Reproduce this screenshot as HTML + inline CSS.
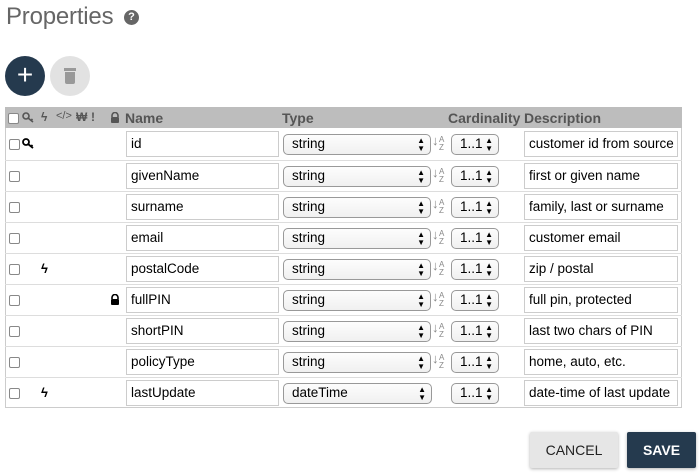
<!DOCTYPE html>
<html><head><style>
*{box-sizing:border-box;margin:0;padding:0}
body{width:700px;height:474px;background:#fff;font-family:"Liberation Sans",sans-serif;position:relative;overflow:hidden;color:#000}
.a{position:absolute}
h1{position:absolute;left:6px;top:3px;font-size:24px;font-weight:normal;color:#666;letter-spacing:-0.2px}
.help{position:absolute;left:124px;top:10px;width:15px;height:15px;border-radius:50%;background:#666;color:#fff;font-size:11px;font-weight:bold;text-align:center;line-height:15px}
.add{left:5px;top:56px;width:40px;height:40px;border-radius:50%;background:#253a4e;color:#fff;font-size:28px;text-align:center;line-height:38px}
.del{left:50px;top:56px;width:40px;height:40px;border-radius:50%;background:#e2e2e2}
.tbl{left:5px;top:107px;width:677px;height:301px;border:1px solid #ccc;border-top:none}
.hdr{left:5px;top:107px;width:677px;height:21px;background:#bdbdbd}
.hdr span{position:absolute;top:3px;font-size:14px;font-weight:bold;color:#555}
.cb{position:absolute;width:11px;height:11px;border:1px solid #888;border-radius:2px;background:#fff}
.row{position:absolute;left:5px;width:677px;height:31px;border-top:1px solid #ddd}
.in{position:absolute;top:2px;height:26px;border:1px solid #ccc;font-size:13.5px;line-height:24px;padding-left:4px;background:#fff;white-space:nowrap;overflow:hidden}
.sel{position:absolute;top:5px;height:21px;border:1px solid #999;border-radius:5px;font-size:13.5px;line-height:17px;padding-left:8px;background:linear-gradient(#fdfdfd,#f0f0f0)}
.sel i{position:absolute;right:5px;top:0;font-style:normal;font-size:8px;line-height:8px;top:2px;}
.sort{position:absolute;left:427px;top:6px;font-size:8px;color:#888;line-height:8px}
</style></head><body>
<h1>Properties</h1><div class="help">?</div>
<div class="a add">+</div>
<div class="a del"><div class="a" style="left:14px;top:12px;width:12px;height:3px;background:#999"></div><div class="a" style="left:15px;top:16px;width:10px;height:12px;background:#999;border-radius:0 0 2px 2px"></div></div>
<div class="a tbl"></div>
<div class="a hdr">
<div class="cb" style="left:3px;top:6px"></div>
<svg class="a" style="left:17px;top:5px" width="13" height="11"><circle cx="4" cy="4" r="3" stroke="#555" stroke-width="1.6" fill="none"/><path d="M6 6L11 10M9 8.5L10.5 7" stroke="#555" stroke-width="1.6"/></svg>
<span style="left:36px;font-size:12px">ϟ</span>
<span style="left:51px;font-size:11px;font-weight:normal">&lt;/&gt;</span>
<span style="left:71px;font-size:12px">₩</span>
<span style="left:86px;font-size:12px">!</span>
<svg class="a" style="left:105px;top:5px" width="10" height="11"><path d="M2 5V3.5a3 3 0 0 1 6 0V5" stroke="#555" stroke-width="1.6" fill="none"/><rect x="1" y="5" width="8" height="6" rx="1" fill="#555"/></svg>
<span style="left:120px">Name</span>
<span style="left:277px">Type</span>
<span style="left:443px">Cardinality</span>
<span style="left:519px">Description</span>
</div>

<div id="rows"></div>
<script>
var d=[["id","string","customer id from source","k"],["givenName","string","first or given name",""],["surname","string","family, last or surname",""],["email","string","customer email",""],["postalCode","string","zip / postal","b"],["fullPIN","string","full pin, protected","l"],["shortPIN","string","last two chars of PIN",""],["policyType","string","home, auto, etc.",""],["lastUpdate","dateTime","date-time of last update","b"]];
var h="";
d.forEach(function(r,i){
var t=129+31*i;var last=r[1]=="dateTime";
h+='<div class="row" style="top:'+t+'px;'+(i==0?'border-top:none':'')+'">';
h+='<div class="cb" style="left:4px;top:10px"></div>';
if(r[3]=="k")h+='<svg class="a" style="left:17px;top:9px" width="13" height="11"><circle cx="4" cy="4" r="3" stroke="#000" stroke-width="1.8" fill="none"/><path d="M6 6L11 10M9 8.5L10.5 7" stroke="#000" stroke-width="1.8"/></svg>';
if(r[3]=="b")h+='<span class="a" style="left:36px;top:7px;font-size:13px;font-weight:bold">ϟ</span>';
if(r[3]=="l")h+='<svg class="a" style="left:105px;top:9px" width="10" height="11"><path d="M2 5V3.5a3 3 0 0 1 6 0V5" stroke="#000" stroke-width="1.6" fill="none"/><rect x="1" y="5" width="8" height="6" rx="1"/></svg>';
h+='<div class="in" style="left:121px;width:153px">'+r[0]+'</div>';
h+='<div class="sel" style="left:278px;width:'+(last?149:148)+'px">'+r[1]+'<i>▲<br>▼</i></div>';
if(!last)h+='<div class="sort"><span style="font-size:13px;position:absolute;top:2px;left:0">↓</span><span style="position:absolute;left:7px;top:1px">A<br>Z</span></div>';
h+='<div class="sel" style="left:446px;width:48px">1..1<i>▲<br>▼</i></div>';
h+='<div class="in" style="left:519px;width:154px">'+r[2]+'</div>';
h+='</div>';});
document.getElementById("rows").innerHTML=h;
</script>
<div class="a" style="left:530px;top:432px;width:88px;height:36px;background:#e6e6e6;border-radius:2px;box-shadow:0 1px 3px rgba(0,0,0,.3);font-size:14px;text-align:center;line-height:36px;color:#222">CANCEL</div>
<div class="a" style="left:627px;top:432px;width:69px;height:36px;background:#253a4e;border-radius:2px;box-shadow:0 1px 3px rgba(0,0,0,.3);font-size:14px;font-weight:bold;text-align:center;line-height:36px;color:#fff">SAVE</div>
</body></html>
